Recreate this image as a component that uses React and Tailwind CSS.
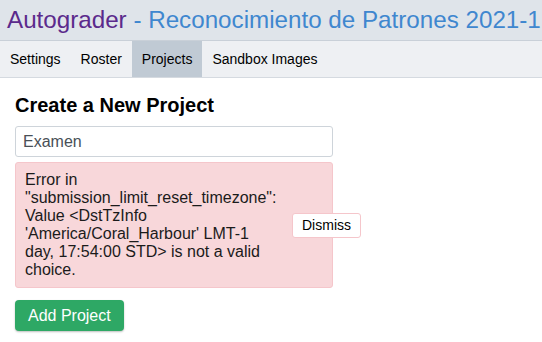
import React, { useState } from 'react';

const tabs = ['Settings', 'Roster', 'Projects', 'Sandbox Images'];

const App = () => {
  const [name, setName] = useState('Examen');
  const [showError, setShowError] = useState(true);

  return (
    <div className="min-h-screen bg-white text-black" style={{ fontFamily: '"Liberation Sans", Arial, sans-serif' }}>
      <div className="h-[41px] bg-[#dfe4ea] border-b border-[#c9d0d8] flex items-center px-[7px]">
        <h1 className="text-[24.2px] leading-none whitespace-nowrap">
          <span className="text-[#5b2a8c]">Autograder</span>
          <span className="text-[#3f87cf]"> - Reconocimiento de Patrones 2021-1</span>
        </h1>
      </div>

      <div className="h-[37px] bg-[#eef0f3] border-b border-[#d5dae0] flex">
        {tabs.map((tab) => (
          <div
            key={tab}
            className={
              'px-[10px] flex items-center text-[14px] ' +
              (tab === 'Projects' ? 'bg-[#c0cad4]' : '')
            }
          >
            {tab}
          </div>
        ))}
      </div>

      <div className="px-[15px] pt-[15px]">
        <h2 className="text-[20px] font-bold leading-[24px] mb-[9px]">Create a New Project</h2>

        <input
          type="text"
          value={name}
          onChange={(e) => setName(e.target.value)}
          className="w-[318px] h-[31px] border border-[#ced4da] rounded-[3px] px-[7px] text-[16px] text-[#495057] outline-none block"
        />

        {showError && (
          <div className="mt-[5px] w-[318px] h-[126px] bg-[#f8d7da] border border-[#f5c6cb] rounded-[3px] flex items-center pl-[9px]">
            <div className="w-[250px] shrink-0 text-[16px] leading-[18px] text-[#1b1b1b]">
              Error in "submission_limit_reset_timezone": Value &lt;DstTzInfo 'America/Coral_Harbour' LMT-1 day, 17:54:00 STD&gt; is not a valid choice.
            </div>
            <button
              onClick={() => setShowError(false)}
              className="ml-[17px] shrink-0 h-[25px] px-[9px] bg-white border border-[#f5c6cb] rounded-[3px] text-[14px] leading-none"
            >
              Dismiss
            </button>
          </div>
        )}

        <button className="mt-[12px] h-[31px] px-[13px] bg-[#2ea865] text-white text-[16px] rounded-[4px] shadow-[0_1px_2px_rgba(0,0,0,0.25)]">
          Add Project
        </button>
      </div>
    </div>
  );
};

export default App;
